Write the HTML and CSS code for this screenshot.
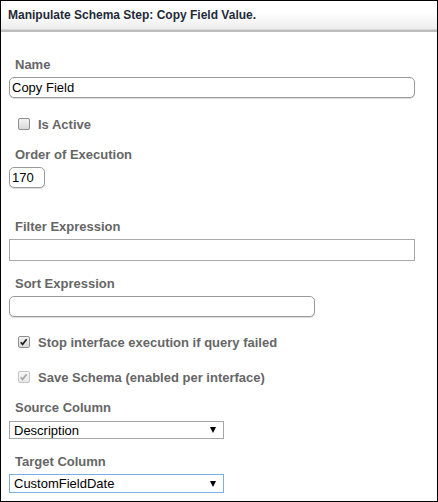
FILE: index.html
```html
<!DOCTYPE html>
<html>
<head>
<meta charset="utf-8">
<link rel="stylesheet" href="styles.css">
</head>
<body>
<div class="panel">
  <div class="header">Manipulate Schema Step: Copy Field Value.</div>
  <div class="content">
    <div class="lbl lbl-name">Name</div>
    <input class="txt rounded w-full" type="text" value="Copy Field">

    <div class="check-row row-active">
      <span class="cb"></span><span class="cb-lbl">Is Active</span>
    </div>

    <div class="lbl lbl-order">Order of Execution</div>
    <input class="txt rounded w-order" type="text" value="170">

    <div class="lbl lbl-filter">Filter Expression</div>
    <input class="txt square w-full tall" type="text" value="">

    <div class="lbl lbl-sort">Sort Expression</div>
    <input class="txt rounded w-sort" type="text" value="">

    <div class="check-row row-stop">
      <span class="cb checked"><svg viewBox="0 0 12 12" width="12" height="12"><path d="M3 6.2 L5 8.6 L9.4 3" fill="none" stroke="#222" stroke-width="1.9"/></svg></span><span class="cb-lbl">Stop interface execution if query failed</span>
    </div>

    <div class="check-row row-save">
      <span class="cb checked disabled"><svg viewBox="0 0 12 12" width="12" height="12"><path d="M3 6.2 L5 8.6 L9.4 3" fill="none" stroke="#a6a6a6" stroke-width="1.9"/></svg></span><span class="cb-lbl">Save Schema (enabled per interface)</span>
    </div>

    <div class="lbl lbl-source">Source Column</div>
    <div class="sel"><span>Description</span><span class="arrow"></span></div>

    <div class="lbl lbl-target">Target Column</div>
    <div class="sel focused"><span>CustomFieldDate</span><span class="arrow"></span></div>
  </div>
</div>
</body>
</html>
```
FILE: styles.css
```css
* { box-sizing: border-box; }
html, body { margin: 0; padding: 0; background: #fff; }
body { font-family: "Liberation Sans", Arial, sans-serif; }

.panel {
  width: 438px;
  height: 502px;
  border: 1px solid #000;
  overflow: hidden;
  display: flex;
  flex-direction: column;
}

.header {
  height: 31px;
  padding: 7px 0 0 7px;
  font-size: 12px;
  font-weight: bold;
  color: #1f2a38;
  background: linear-gradient(#ffffff, #ffffff 40%, #ececec);
  border-bottom: 2px solid #bdbdbd;
  box-shadow: inset 0 -1px 0 #d8d8d8;
}

.content {
  padding: 0 0 0 8px;
  display: flex;
  flex-direction: column;
  align-items: flex-start;
}

.lbl {
  font-size: 13px;
  font-weight: bold;
  color: #666;
  line-height: 15px;
  height: 15px;
  padding-left: 6px;
  margin-bottom: 5px;
}
.lbl-name { margin-top: 25px; }
.lbl-order { margin-top: 15px; }
.lbl-filter { margin-top: 31px; }
.lbl-sort { margin-top: 15px; }
.lbl-source { margin-top: 15px; margin-bottom: 6px; }
.lbl-target { margin-top: 15px; }

.txt {
  display: block;
  height: 21px;
  border: 1px solid #a3a3a3;
  padding: 0 2px;
  font-family: "Liberation Sans", Arial, sans-serif;
  font-size: 13px;
  color: #000;
  background: #fff;
  outline: none;
  margin: 0;
}
.rounded {
  border-radius: 5px;
  border-color: #9a9a9a;
  box-shadow: 0 1px 1px rgba(0,0,0,0.15);
}
.square { border-color: #a9a9a9; }
.tall { height: 22px; }
.w-full { width: 406px; }
.w-order { width: 36px; }
.w-sort { width: 306px; }

.check-row {
  display: flex;
  align-items: center;
  height: 16px;
  padding-left: 9px;
}
.row-active { margin-top: 18px; }
.row-stop { margin-top: 17px; }
.row-save { margin-top: 19px; }

.cb {
  width: 12px;
  height: 12px;
  border: 1px solid #8f8f8f;
  border-radius: 2px;
  background: linear-gradient(#f4f4f4, #d9d9d9);
  display: flex;
  align-items: center;
  justify-content: center;
  flex: none;
}
.cb svg { display: block; margin-left: -1px; margin-top: -1px; }
.cb.disabled { border-color: #c4c4c4; background: linear-gradient(#f7f7f7, #e8e8e8); }

.cb-lbl {
  margin-left: 8px;
  font-size: 13px;
  font-weight: bold;
  color: #666;
}

.sel {
  width: 215px;
  height: 18px;
  border: 1px solid #a6a6a6;
  display: flex;
  align-items: center;
  justify-content: space-between;
  padding: 0 7px 0 4px;
  font-size: 13px;
  color: #000;
  background: #fff;
}
.sel.focused { border-color: #7aaee6; height: 19px; }
.arrow {
  width: 0;
  height: 0;
  border-left: 3px solid transparent;
  border-right: 3px solid transparent;
  border-top: 6px solid #000;
}
```
